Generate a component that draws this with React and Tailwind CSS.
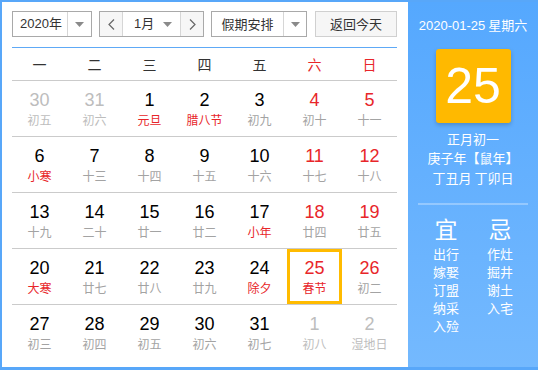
const WEEK = ["一", "二", "三", "四", "五", "六", "日"];

const ROWS = [
  [
    { d: 30, l: "初五", other: true },
    { d: 31, l: "初六", other: true },
    { d: 1, l: "元旦", fest: true },
    { d: 2, l: "腊八节", fest: true },
    { d: 3, l: "初九" },
    { d: 4, l: "初十" },
    { d: 5, l: "十一" },
  ],
  [
    { d: 6, l: "小寒", fest: true },
    { d: 7, l: "十三" },
    { d: 8, l: "十四" },
    { d: 9, l: "十五" },
    { d: 10, l: "十六" },
    { d: 11, l: "十七" },
    { d: 12, l: "十八" },
  ],
  [
    { d: 13, l: "十九" },
    { d: 14, l: "二十" },
    { d: 15, l: "廿一" },
    { d: 16, l: "廿二" },
    { d: 17, l: "小年", fest: true },
    { d: 18, l: "廿四" },
    { d: 19, l: "廿五" },
  ],
  [
    { d: 20, l: "大寒", fest: true },
    { d: 21, l: "廿七" },
    { d: 22, l: "廿八" },
    { d: 23, l: "廿九" },
    { d: 24, l: "除夕", fest: true },
    { d: 25, l: "春节", fest: true, today: true },
    { d: 26, l: "初二" },
  ],
  [
    { d: 27, l: "初三" },
    { d: 28, l: "初四" },
    { d: 29, l: "初五" },
    { d: 30, l: "初六" },
    { d: 31, l: "初七" },
    { d: 1, l: "初八", other: true },
    { d: 2, l: "湿地日", other: true },
  ],
];

const YI = ["出行", "嫁娶", "订盟", "纳采", "入殓"];
const JI = ["作灶", "掘井", "谢土", "入宅"];

function Caret() {
  return (
    <svg width="9" height="5" viewBox="0 0 9 5">
      <path d="M0 0h9L4.5 5z" fill="#8a8a8a" />
    </svg>
  );
}

function Chevron({ dir }) {
  return (
    <svg width="7" height="11" viewBox="0 0 7 11">
      <path
        d={dir === "left" ? "M6 0.5L1 5.5l5 5" : "M1 0.5l5 5-5 5"}
        fill="none"
        stroke="#666"
        strokeWidth="1.2"
      />
    </svg>
  );
}

function DayCell({ cell, weekend }) {
  let numColor = "text-black";
  let lunarColor = "text-[#a3a3a3]";
  if (cell.other) {
    numColor = "text-[#bdbdbd]";
    lunarColor = "text-[#bdbdbd]";
  } else {
    if (weekend) numColor = "text-[#e8262a]";
    if (cell.fest) lunarColor = "text-[#e8262a]";
  }

  return (
    <div
      className={`flex h-[55px] flex-col items-center justify-center ${
        cell.today ? "border-[3px] border-[#ffbb00]" : ""
      }`}
    >
      <div
        className={`text-[18px] leading-[20px] ${numColor} font-['Liberation_Sans',sans-serif]`}
      >
        {cell.d}
      </div>
      <div className={`mt-[2px] text-[12px] leading-[16px] ${lunarColor}`}>
        {cell.l}
      </div>
    </div>
  );
}

export default function App() {
  return (
    <div className="flex h-[370px] w-[538px] border-b-[3px] border-l-2 border-t-2 border-[#58a7f9] font-['Noto_Sans_CJK_SC',sans-serif]">
      <div className="w-[406px] bg-white pl-[10px] pr-[11px] pt-[9px]">
        <div className="flex h-[26px] text-[13px] text-[#333]">
          <div className="flex w-[80px] border border-[#a9a9a9] bg-white">
            <div className="flex flex-1 items-center justify-center pl-[2px] font-['Liberation_Sans','Noto_Sans_CJK_SC',sans-serif]">
              2020年
            </div>
            <div className="flex w-[24px] items-center justify-center border-l border-[#d6d6d6]">
              <Caret />
            </div>
          </div>

          <div className="ml-[7px] flex w-[105px] border border-[#a9a9a9] bg-white">
            <div className="flex w-[22px] items-center justify-center bg-[#f6f6f6]">
              <Chevron dir="left" />
            </div>
            <div className="flex flex-1 items-center border-x border-[#d6d6d6] pl-[11px] pr-[8px] font-['Liberation_Sans','Noto_Sans_CJK_SC',sans-serif]">
              <span className="flex-1">1月</span>
              <Caret />
            </div>
            <div className="flex w-[22px] items-center justify-center bg-[#f6f6f6]">
              <Chevron dir="right" />
            </div>
          </div>

          <div className="ml-[7px] flex w-[96px] border border-[#a9a9a9] bg-white">
            <div className="flex flex-1 items-center justify-center">
              假期安排
            </div>
            <div className="flex w-[23px] items-center justify-center border-l border-[#d6d6d6]">
              <Caret />
            </div>
          </div>

          <div className="ml-auto flex w-[82px] items-center justify-center border border-[#d0d0d0] bg-[#f6f6f6]">
            返回今天
          </div>
        </div>

        <div className="mt-[10px] border-t border-[#5ea9f6]" />
        <div className="grid h-[33px] grid-cols-7 border-b border-[#cbcbcb] text-[14px] text-[#333]">
          {WEEK.map((w, i) => (
            <div
              key={w}
              className={`flex items-center justify-center ${
                i >= 5 ? "text-[#e8262a]" : ""
              }`}
            >
              {w}
            </div>
          ))}
        </div>

        {ROWS.map((row, ri) => (
          <div
            key={ri}
            className={`grid grid-cols-7 ${
              ri < ROWS.length - 1 ? "border-b border-[#cbcbcb]" : ""
            }`}
          >
            {row.map((cell, ci) => (
              <DayCell key={ci} cell={cell} weekend={ci >= 5} />
            ))}
          </div>
        ))}
      </div>

      <div className="flex flex-1 flex-col items-center bg-gradient-to-b from-[#55a8fe] to-[#74b9fe] pt-[13px] text-white">
        <div className="text-[13px] leading-[20px]">
          <span className="font-['Liberation_Sans',sans-serif]">2020-01-25</span>{" "}
          星期六
        </div>
        <div className="mt-[13px] flex h-[74px] w-[75px] items-center justify-center rounded-[3px] bg-[#ffb900] text-[50px] leading-none shadow-[0_2px_4px_rgba(0,0,0,0.2)] font-['Liberation_Sans',sans-serif]">
          25
        </div>
        <div className="mt-[6px] text-[13px] leading-[19px]">正月初一</div>
        <div className="text-[13px] leading-[20px]">庚子年【鼠年】</div>
        <div className="text-[13px] leading-[20px]">丁丑月 丁卯日</div>
        <div className="mt-[15px] w-[110px] border-t-2 border-white/30" />
        <div className="mt-[8px] flex w-[110px] justify-between px-[15px]">
          <div className="flex flex-col items-center">
            <div className="text-[23px] leading-[30px]">宜</div>
            <div className="mt-[2px] text-[13px] leading-[18px]">
              {YI.map((t) => (
                <div key={t}>{t}</div>
              ))}
            </div>
          </div>
          <div className="flex flex-col items-center">
            <div className="text-[23px] leading-[30px]">忌</div>
            <div className="mt-[2px] text-[13px] leading-[18px]">
              {JI.map((t) => (
                <div key={t}>{t}</div>
              ))}
            </div>
          </div>
        </div>
      </div>
    </div>
  );
}
